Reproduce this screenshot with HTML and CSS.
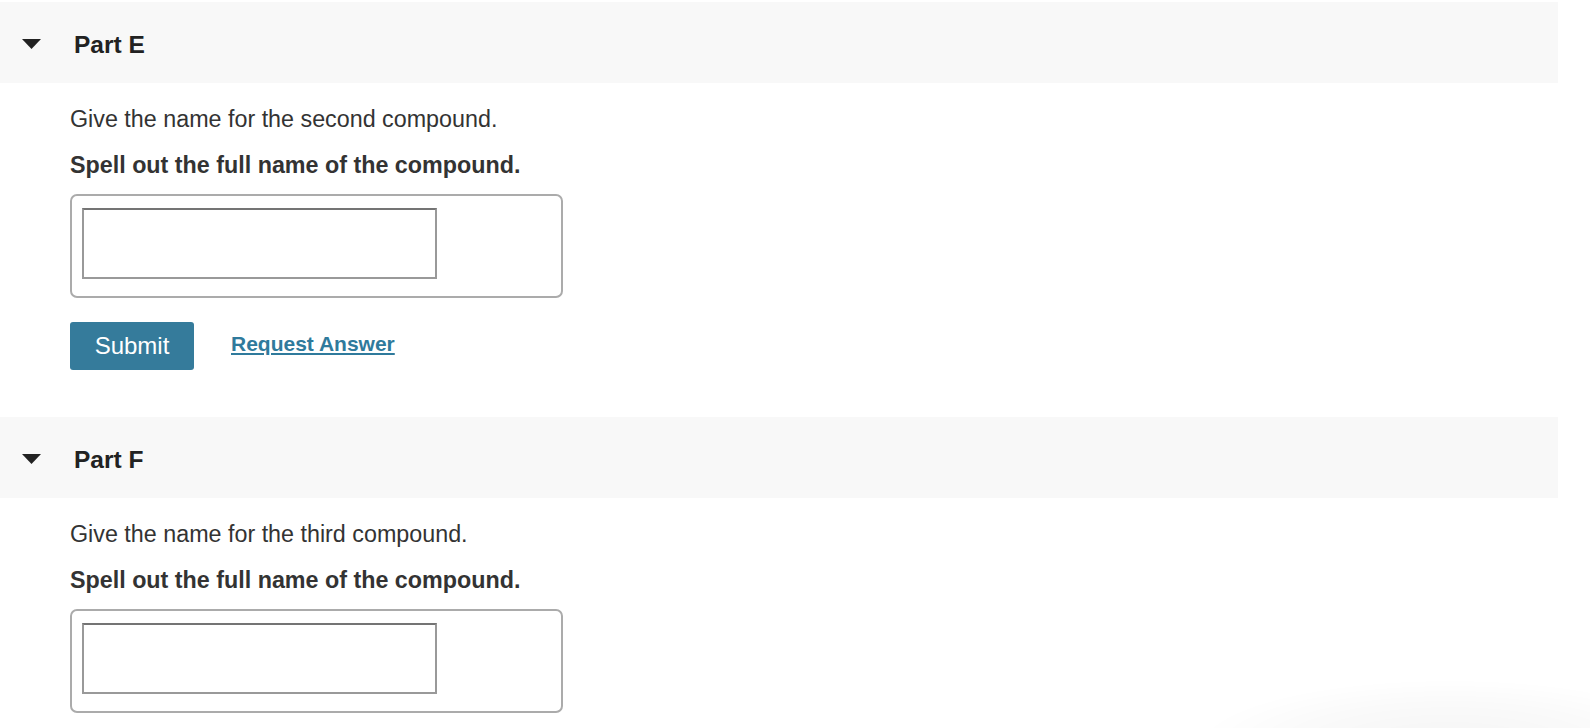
FILE: index.html
```html
<!DOCTYPE html>
<html lang="en">
<head>
<meta charset="utf-8">
<title>Parts</title>
<link rel="stylesheet" href="styles.css">
</head>
<body>
<div class="page">
  <section class="part">
    <div class="part-header">
      <svg class="caret" width="19" height="10" viewBox="0 0 19 10"><polygon points="0,0 19,0 9.5,10" fill="#222"/></svg>
      <h2 class="part-title">Part E</h2>
    </div>
    <div class="part-body">
      <p class="prompt">Give the name for the second compound.</p>
      <p class="instr">Spell out the full name of the compound.</p>
      <div class="answer-box">
        <input class="answer-input" type="text" aria-label="Answer">
      </div>
      <div class="actions">
        <button class="submit" type="button">Submit</button>
        <a class="request" href="#">Request Answer</a>
      </div>
    </div>
  </section>
  <section class="part">
    <div class="part-header">
      <svg class="caret" width="19" height="10" viewBox="0 0 19 10"><polygon points="0,0 19,0 9.5,10" fill="#222"/></svg>
      <h2 class="part-title">Part F</h2>
    </div>
    <div class="part-body">
      <p class="prompt">Give the name for the third compound.</p>
      <p class="instr">Spell out the full name of the compound.</p>
      <div class="answer-box">
        <input class="answer-input" type="text" aria-label="Answer">
      </div>
    </div>
  </section>
</div>
<div class="corner-shadow"></div>
</body>
</html>
```

FILE: styles.css
```css
html, body {
  margin: 0;
  padding: 0;
  background: #ffffff;
  height: 100%;
  overflow: hidden;
}
body {
  font-family: "Liberation Sans", Arial, Helvetica, sans-serif;
  color: #333333;
}
.page {
  width: 1558px;
  padding-top: 2px;
}
.part-header {
  height: 81px;
  background: #f8f8f8;
  display: flex;
  align-items: center;
  padding-left: 22px;
  box-sizing: border-box;
}
.caret {
  display: block;
  flex: none;
  margin-top: 2px;
}
.part-title {
  margin: 0 0 0 33px;
  padding-top: 4px;
  font-size: 24.5px;
  line-height: 28px;
  font-weight: bold;
  color: #222222;
}
.part-body {
  padding: 23px 0 47px 70px;
}
.prompt {
  margin: 0;
  font-size: 23.3px;
  line-height: 26px;
  color: #333333;
}
.instr {
  margin: 20px 0 0 0;
  font-size: 23.3px;
  line-height: 26px;
  font-weight: bold;
  color: #333333;
}
.answer-box {
  margin-top: 16px;
  width: 493px;
  height: 104px;
  box-sizing: border-box;
  border: 2px solid #ababab;
  border-radius: 7px;
  padding: 12px 0 0 10px;
}
.answer-input {
  display: block;
  width: 355px;
  height: 71px;
  box-sizing: border-box;
  margin: 0;
  padding: 0;
  border: 2px solid #999999;
  border-top-color: #747474;
  border-radius: 0;
  background: #ffffff;
  outline: none;
}
.actions {
  margin-top: 24px;
  display: flex;
  align-items: center;
}
.submit {
  width: 124px;
  height: 48px;
  border: none;
  border-radius: 3px;
  background: #357b9b;
  color: #ffffff;
  font-family: "Liberation Sans", Arial, Helvetica, sans-serif;
  font-size: 24px;
  padding: 0;
  cursor: pointer;
}
.request {
  margin-left: 37px;
  margin-top: -4px;
  font-size: 21px;
  font-weight: bold;
  color: #2f7a9c;
  text-decoration: underline;
  text-decoration-thickness: 2px;
  text-underline-offset: 2px;
}
.corner-shadow {
  position: fixed;
  right: -120px;
  bottom: -90px;
  width: 520px;
  height: 140px;
  border-radius: 50%;
  background: radial-gradient(ellipse at center, rgba(0,0,0,0.045) 0%, rgba(0,0,0,0.02) 45%, rgba(0,0,0,0) 70%);
  pointer-events: none;
}
```
